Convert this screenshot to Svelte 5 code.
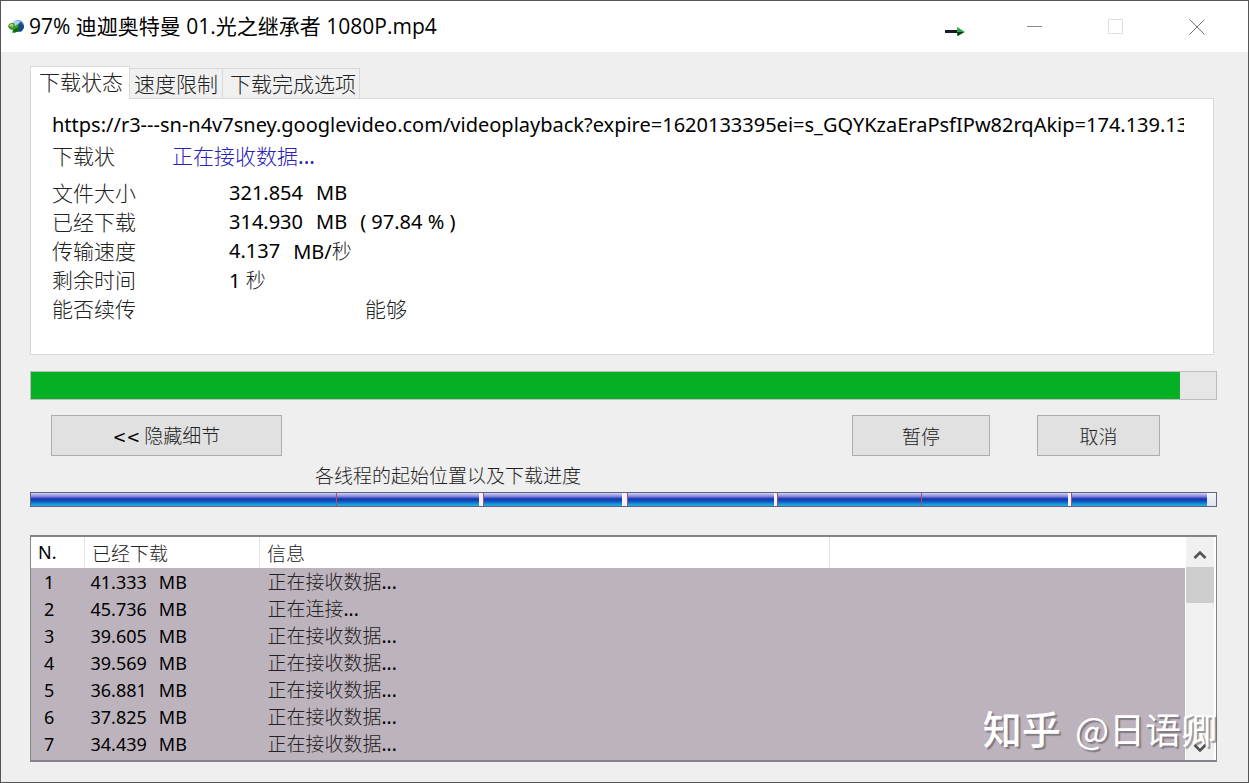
<script>
  // --- Download state ---

  let title = '97% 迪迦奥特曼 01.光之继承者 1080P.mp4';
  let url = 'https://r3---sn-n4v7sney.googlevideo.com/videoplayback?expire=1620133395ei=s_GQYKzaEraPsfIPw82rqAkip=174.139.13';
  let progress = 97;

  const tabs = ['下载状态', '速度限制', '下载完成选项'];
  let activeTab = 0;

  const connections = [
    { size: '41.333', info: '正在接收数据' },
    { size: '45.736', info: '正在连接' },
    { size: '39.605', info: '正在接收数据' },
    { size: '39.569', info: '正在接收数据' },
    { size: '36.881', info: '正在接收数据' },
    { size: '37.825', info: '正在接收数据' },
    { size: '34.439', info: '正在接收数据' },
  ];

  // Downloaded part of each thread, then the part still missing behind it
  const segments = [
    { done: 306, left: 0 },
    { done: 143, left: 4 },
    { done: 139, left: 5 },
    { done: 146, left: 3 },
    { done: 144, left: 0 },
    { done: 146, left: 3 },
    { done: 136, left: 9 },
  ];
</script>

<main class="window">
  <header class="titlebar">
    <svg class="logo" width="16" height="16" viewBox="0 0 16 16" aria-hidden="true">
      <circle cx="10" cy="7" r="6" fill="#3f78b8" />
      <path d="M6 2Q10 0 13 3Q10 4 9 7Q5 8 4 5Z" fill="#a9d2ee" />
      <path d="M12 3L16 7Q16 11 12 13L9 9Z" fill="#174a80" />
      <path d="M0 7Q2 3 6 4L7 7L10 5L11 12L4 14L5 11Q1 11 0 7Z" fill="#3b9a35" />
      <path d="M1 7Q3 4 5 5L5 8Z" fill="#d5cf4b" />
      <path d="M5 11L11 8V12L6 14Z" fill="#136318" />
    </svg>
    <h1>{title}</h1>
    <svg class="arrow" width="22" height="12" viewBox="0 0 22 12" aria-hidden="true">
      <path d="M1 5H13V8H1Z" fill="#1b1b2c" />
      <path d="M13 2L21 7L13 11Z" fill="#2fa345" />
      <path d="M13 7H20L14 11Z" fill="#0b3d14" />
    </svg>
    <div class="window-buttons">
      <button type="button" aria-label="最小化">
        <svg width="16" height="16" viewBox="0 0 16 16"><path d="M0 7.5H15" stroke="#8a8a8a" /></svg>
      </button>
      <button type="button" aria-label="最大化" disabled>
        <svg width="16" height="16" viewBox="0 0 16 16"><path d="M.5.5H14.500V14.500H.5Z" fill="none" stroke="#dedede" /></svg>
      </button>
      <button type="button" aria-label="关闭">
        <svg width="16" height="16" viewBox="0 0 16 16"><path d="M.5.5L15.500 15.500M15.500.5L.5 15.500" stroke="#777" /></svg>
      </button>
    </div>
  </header>

  <div class="content">
    <div class="tabs" role="tablist">
      {#each tabs as tab, i}
        <button
          type="button"
          role="tab"
          class="tab"
          class:active={activeTab === i}
          aria-selected={activeTab === i}
          on:click={() => (activeTab = i)}>{tab}</button>
      {/each}
    </div>

    <section class="panel" role="tabpanel">
      <p class="url">{url}</p>
      <dl class="status">
        <dt>下载状</dt>
        <dd>正在接收数据<span class="dots">...</span></dd>
      </dl>
      <dl class="details">
        <dt>文件大小</dt>
        <dd class="num"><span>321.854</span><span>MB</span></dd>
        <dt>已经下载</dt>
        <dd class="num"><span>314.930</span><span>MB</span><span>( 97.84 % )</span></dd>
        <dt>传输速度</dt>
        <dd class="num"><span>4.137</span><span>MB/<span class="cjk">秒</span></span></dd>
        <dt>剩余时间</dt>
        <dd class="num"><span>1 <span class="cjk">秒</span></span></dd>
        <dt>能否续传</dt>
        <dd class="resume">能够</dd>
      </dl>
    </section>

    <div class="progress" role="progressbar" aria-label="下载进度" aria-valuenow={progress} aria-valuemin="0" aria-valuemax="100">
      <div class="progress-fill" style="width: {progress}%"></div>
    </div>

    <div class="actions">
      <button type="button" class="toggle"><span class="chevrons">&lt;&lt;</span> 隐藏细节</button>
      <button type="button" class="pause">暂停</button>
      <button type="button" class="cancel">取消</button>
    </div>

    <p class="caption">各线程的起始位置以及下载进度</p>

    <div class="threads">
      {#each segments as segment}
        <div class="done" style="flex-grow: {segment.done}"></div>
        <div class="left" style="flex-grow: {segment.left}"></div>
      {/each}
    </div>

    <div class="list">
      <table>
        <thead>
          <tr>
            <th class="col-n num">N.</th>
            <th class="col-size">已经下载</th>
            <th class="col-info">信息</th>
            <th></th>
          </tr>
        </thead>
        <tbody>
          {#each connections as row, i}
            <tr>
              <td class="num index">{i + 1}</td>
              <td class="num"><span class="size"><span>{row.size}</span><span>MB</span></span></td>
              <td>{row.info}<span class="dots">...</span></td>
              <td></td>
            </tr>
          {/each}
        </tbody>
      </table>
      <div class="scrollbar">
        <button type="button" aria-label="向上滚动">
          <svg width="14" height="10" viewBox="0 0 14 10"><path d="M1.500 8L7 2.500L12.500 8" fill="none" stroke="#505050" stroke-width="2.500" /></svg>
        </button>
        <div class="thumb"></div>
        <button type="button" class="down" aria-label="向下滚动">
          <svg width="14" height="10" viewBox="0 0 14 10"><path d="M1.500 2L7 7.500L12.500 2" fill="none" stroke="#505050" stroke-width="2.500" /></svg>
        </button>
      </div>
    </div>
  </div>

  <div class="watermark"><b>知乎</b> @日语卿</div>
</main>

<style>
  :global(body) {
    background: #efefef;
  }

  .window {
    --latin: 'Noto Sans', 'Open Sans', sans-serif;
    --cjk: 'Noto Sans CJK SC', sans-serif;
    position: relative;
    box-sizing: border-box;
    min-height: 100vh;
    border: 1px solid #555;
    background: #efefef;
    color: #222;
    font: 300 21px/29px var(--cjk);
  }

  h1, p, dl, dd {
    margin: 0;
  }

  button {
    margin: 0;
    padding: 0;
    color: inherit;
    font: inherit;
  }

  /* Title bar */
  .titlebar {
    display: flex;
    align-items: center;
    height: 51px;
    padding-left: 7px;
    background: #fff;
  }

  h1 {
    flex: 1;
    margin-left: 5px;
    color: #000;
    font: 400 21px/29px 'Open Sans', var(--cjk);
    white-space: nowrap;
  }

  .arrow {
    margin: 9px 28px 0 0;
  }

  .window-buttons {
    display: flex;
  }

  .window-buttons button {
    display: flex;
    align-items: center;
    justify-content: center;
    width: 81px;
    height: 51px;
    border: 0;
    background: none;
  }

  .window-buttons button:last-child {
    margin-right: 11px;
  }

  .content {
    padding: 14px 31px 20px 29px;
  }

  /* Tabs */
  .tabs {
    display: flex;
    align-items: flex-end;
    height: 32px;
  }

  .tab {
    height: 30px;
    padding: 0 4px;
    border: 1px solid #d9d9d9;
    border-left: 0;
    border-bottom: 0;
    background: #f0f0f0;
    white-space: nowrap;
  }

  .tab:last-child {
    padding-left: 7px;
    padding-right: 3px;
  }

  .tab.active {
    position: relative;
    height: 33px;
    margin-bottom: -1px;
    padding: 0 6px 3px 8px;
    border-left: 1px solid #d9d9d9;
    background: #fff;
  }

  .panel {
    height: 255px;
    margin-right: 3px;
    border: 1px solid #d9d9d9;
    background: #fff;
  }

  .url {
    margin: 11px 29px 0 21px;
    overflow: hidden;
    color: #000;
    font: 400 20px/29px var(--latin);
    white-space: nowrap;
  }

  .status,
  .details {
    display: grid;
    grid-auto-rows: 29px;
    margin-left: 21px;
  }

  .status {
    grid-template-columns: 120px 1fr;
    margin-top: 2px;
    margin-bottom: 8px;
  }

  .status dd {
    color: #2a22b8;
  }

  .details {
    grid-template-columns: 177px 1fr;
  }

  .num,
  .dots {
    color: #000;
    font-family: var(--latin);
    font-weight: 400;
  }

  .status .dots {
    color: inherit;
  }

  .details .num {
    display: flex;
    gap: 13px;
    font-size: 20px;
  }

  .cjk {
    font-family: var(--cjk);
    font-weight: 300;
    color: #222;
  }

  .resume {
    padding-left: 136px;
  }

  /* Total progress */
  .progress {
    height: 27px;
    margin-top: 16px;
    border: 1px solid #bcbcbc;
    background: #e6e6e6;
  }

  .progress-fill {
    height: 100%;
    background: #06b025;
  }

  .actions {
    display: flex;
    margin: 15px 57px 0 21px;
  }

  .actions button {
    height: 41px;
    border: 1px solid #adadad;
    background: #e1e1e1;
    font-size: 19px;
  }

  .actions .toggle {
    width: 231px;
    margin-right: auto;
  }

  .actions .pause {
    width: 138px;
    margin-right: 47px;
  }

  .actions .cancel {
    width: 123px;
  }

  .chevrons {
    color: #000;
    font-family: 'DejaVu Sans Condensed', 'DejaVu Sans', sans-serif;
    font-weight: 400;
    font-size: 18px;
  }

  .caption {
    margin: 4px 0 3px 285px;
    font-size: 19px;
  }

  /* Per-thread progress */
  .threads {
    display: flex;
    height: 13px;
    border: 1px solid #5c6484;
    background: #f2f2f8;
  }

  .done,
  .left {
    flex: 0 1 0;
  }

  .done {
    background: linear-gradient(#d2d2f4, #8a8ade 25%, #5560cc 35%, #1238a8 45%, #0f55c0 65%, #1478d2 75%, #22b4dc 100%);
  }

  .left + .done {
    border-left: 1px solid #b04a70;
  }

  .left:last-child {
    background: linear-gradient(#f6f6fc, #dde3ee);
  }

  /* Connection list */
  .list {
    display: flex;
    margin-top: 28px;
    border: 2px solid #83838b;
    border-right-width: 1px;
    border-left-width: 1px;
    background: #bdb3bd;
    font-size: 19px;
  }

  table {
    flex: 1;
    border-collapse: collapse;
    table-layout: fixed;
    align-self: flex-start;
    margin-bottom: 3px;
  }

  th {
    height: 31px;
    padding: 0 0 0 7px;
    border-right: 1px solid #e2e2e2;
    background: #fff;
    font-weight: 300;
    line-height: 29px;
    text-align: left;
  }

  th:last-child {
    border-right: 0;
  }

  th.num {
    font-size: 18px;
    font-weight: 400;
  }

  td {
    height: 27px;
    padding: 0 0 0 8px;
    line-height: 24px;
    white-space: nowrap;
  }

  td.num {
    padding-left: 6px;
    font-size: 18px;
  }

  td.index {
    padding-left: 13px;
  }

  .size {
    display: flex;
    gap: 12px;
  }

  .col-n {
    width: 46px;
  }

  .col-size {
    width: 167px;
  }

  .col-info {
    width: 562px;
  }

  .scrollbar {
    display: flex;
    flex-direction: column;
    width: 28px;
    border-left: 1px solid #fff;
    border-right: 2px solid #fff;
    background: #f0f0f0;
  }

  .scrollbar button {
    height: 30px;
    border: 0;
    background: none;
    line-height: 30px;
  }

  .scrollbar .down {
    margin-top: auto;
  }

  .thumb {
    height: 36px;
    background: #cdcdcd;
  }

  .watermark {
    position: absolute;
    right: 31px;
    bottom: 28px;
    color: #fff;
    font: 400 36px/52px var(--cjk);
    text-shadow: 2px 2px 1px rgba(90, 85, 90, 0.6);
    white-space: nowrap;
    pointer-events: none;
  }

  .watermark b {
    margin-right: 6px;
    font-size: 39px;
    font-weight: 500;
  }
</style>
